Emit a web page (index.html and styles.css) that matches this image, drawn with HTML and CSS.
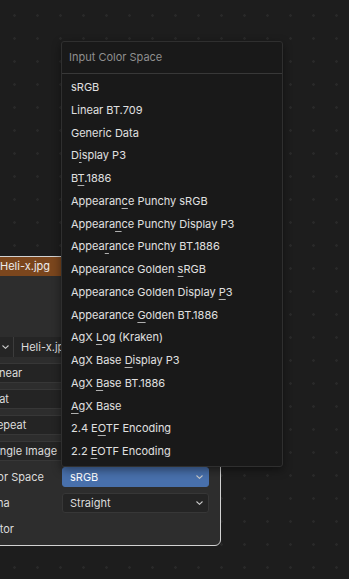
FILE: index.html
```html
<!DOCTYPE html>
<html lang="en">
<head>
    <meta charset="UTF-8">
    <meta name="viewport" content="width=device-width, initial-scale=1.0">
    <title>Input Color Space</title>
    <link rel="stylesheet" href="styles.css">
</head>
<body>

    <div class="node">
        <div class="node-header">Heli-x.jpg</div>
        <div class="node-body">
            <div class="image-row">
                <div class="browse">
                    <svg class="chevron" width="7" height="4" viewBox="0 0 7 4"><polyline points="0.5,0.5 3.5,3.3 6.5,0.5"/></svg>
                </div>
                <div class="image-name">Heli-x.jpg</div>
            </div>
            <div class="dropdown wide">Linear</div>
            <div class="dropdown wide">Flat</div>
            <div class="dropdown wide">Repeat</div>
            <div class="dropdown wide">Single Image</div>
            <div class="prop-row">
                <span class="label">Color Space</span>
                <div class="dropdown active">
                    sRGB
                    <svg class="chevron" width="7" height="4" viewBox="0 0 7 4"><polyline points="0.5,0.5 3.5,3.3 6.5,0.5"/></svg>
                </div>
            </div>
            <div class="prop-row">
                <span class="label">Alpha</span>
                <div class="dropdown">
                    Straight
                    <svg class="chevron" width="7" height="4" viewBox="0 0 7 4"><polyline points="0.5,0.5 3.5,3.3 6.5,0.5"/></svg>
                </div>
            </div>
            <div class="socket-row">
                <span class="label">Vector</span>
            </div>
        </div>
    </div>

    <div class="menu">
        <div class="menu-title">Input Color Space</div>
        <div class="menu-list">
            <div class="menu-item">sRGB</div>
            <div class="menu-item">Linear BT.709</div>
            <div class="menu-item">Generic Data</div>
            <div class="menu-item">D<u>i</u>splay P3</div>
            <div class="menu-item">B<u>T</u>.1886</div>
            <div class="menu-item">Appearan<u>c</u>e Punchy sRGB</div>
            <div class="menu-item">Appeara<u>n</u>ce Punchy Display P3</div>
            <div class="menu-item">Appea<u>r</u>ance Punchy BT.1886</div>
            <div class="menu-item">Appearance Golden <u>s</u>RGB</div>
            <div class="menu-item">Appearance Golden Display <u>P</u>3</div>
            <div class="menu-item">Appearance <u>G</u>olden BT.1886</div>
            <div class="menu-item">AgX <u>L</u>og (Kraken)</div>
            <div class="menu-item">AgX Base <u>D</u>isplay P3</div>
            <div class="menu-item">AgX <u>B</u>ase BT.1886</div>
            <div class="menu-item"><u>A</u>gX Base</div>
            <div class="menu-item">2.4 E<u>O</u>TF Encoding</div>
            <div class="menu-item">2.2 <u>E</u>OTF Encoding</div>
        </div>
    </div>

</body>
</html>
```

FILE: styles.css
```css
body {
    margin: 0;
    height: 579px;
    overflow: hidden;
    background-color: #1d1d1d;
    background-image: radial-gradient(circle, #292929 1px, transparent 1.6px);
    background-size: 23px 23px;
    background-position: 3px 4px;
    font-family: Inter, "DejaVu Sans", sans-serif;
    font-size: 11px;
    color: #dcdcdc;
}

/* image texture node, partly off the left edge */
.node {
    box-sizing: border-box;
    width: 251px;
    margin: 256px 0 0 -30px;
    border: 1px solid #d2d2d2;
    border-radius: 0 6px 6px 0;
    background-color: #2d2d2d;
    overflow: hidden;
}

.node-header {
    height: 19px;
    line-height: 19px;
    padding-left: 29px;
    background-color: #7b461d;
    color: #ececec;
}

.node-body {
    display: flex;
    flex-direction: column;
    gap: 6px;
    padding: 61px 11px 6px 9px;
}

.image-row {
    display: flex;
    height: 20px;
    margin-left: 3px;
    background-color: #252525;
    border-radius: 3px;
}

.browse {
    box-sizing: border-box;
    width: 31px;
    padding-right: 4px;
    display: flex;
    justify-content: flex-end;
    align-items: center;
    border-right: 1px solid #3c3c3c;
}

.image-name {
    line-height: 20px;
    padding-left: 7px;
}

.dropdown {
    box-sizing: border-box;
    height: 20px;
    line-height: 18px;
    padding: 0 5px 0 7px;
    display: flex;
    justify-content: space-between;
    align-items: center;
    background-color: #242424;
    border: 1px solid #373737;
    border-radius: 3px;
}

.dropdown.wide {
    margin-left: 3px;
    padding-left: 6px;
}

.dropdown.active {
    background-color: #4870ac;
    border-color: #4870ac;
    color: #fff;
}

.chevron {
    fill: none;
    stroke: #c8c8c8;
    stroke-width: 1.1;
}

.prop-row {
    display: grid;
    grid-template-columns: 82px 1fr;
    height: 20px;
}

.label {
    line-height: 20px;
    white-space: nowrap;
}

.socket-row {
    height: 20px;
}

/* popup menu */
.menu {
    position: absolute;
    left: 61px;
    top: 41px;
    box-sizing: border-box;
    width: 222px;
    background-color: #191919;
    border: 1px solid #2f2f2f;
    border-radius: 3px;
    box-shadow: 0 3px 10px rgba(0, 0, 0, 0.45);
}

.menu-title {
    height: 31px;
    line-height: 31px;
    padding-left: 7px;
    color: #8f8f8f;
    border-bottom: 1px solid #383838;
}

.menu-list {
    padding: 2px 0 3px;
}

.menu-item {
    height: 22.75px;
    line-height: 22.75px;
    padding-left: 9px;
    color: #e0e0e0;
    white-space: nowrap;
}

.menu-item u {
    text-decoration-color: #b0b0b0;
    text-underline-offset: 3px;
}
```
